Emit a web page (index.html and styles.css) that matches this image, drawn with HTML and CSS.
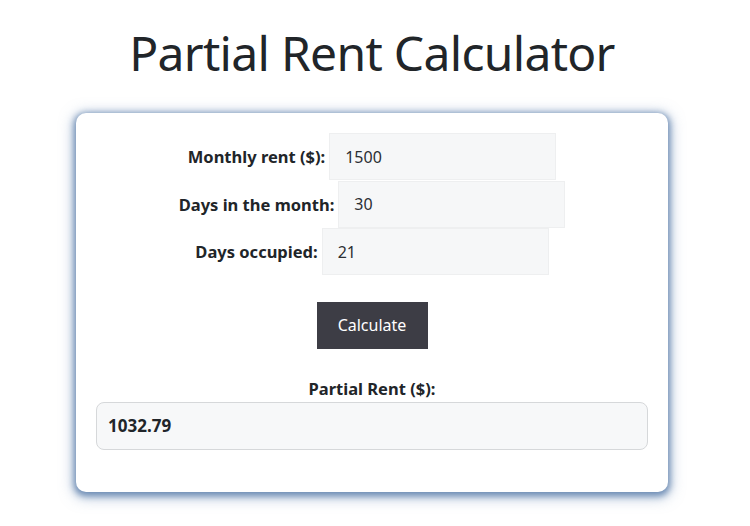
FILE: index.html
```html
<!DOCTYPE html>
<html lang="en">
<head>
    <meta charset="UTF-8">
    <meta name="viewport" content="width=device-width, initial-scale=1.0">
    <title>Partial Rent Calculator</title>
    <link rel="stylesheet" href="styles.css">
</head>
<body>
    <h1>Partial Rent Calculator</h1>
    <div class="calculator">
        <div class="field">
            <label for="rent">Monthly rent ($):</label>
            <input type="text" id="rent" value="1500">
        </div>
        <div class="field">
            <label for="days">Days in the month:</label>
            <input type="text" id="days" value="30">
        </div>
        <div class="field">
            <label for="occupied">Days occupied:</label>
            <input type="text" id="occupied" value="21">
        </div>
        <button class="calc-btn">Calculate</button>
        <div class="result-label">Partial Rent ($):</div>
        <div class="result">1032.79</div>
    </div>
</body>
</html>
```

FILE: styles.css
```css
body {
    margin: 0;
    padding: 0 6px 34px 0;
    font-family: "Noto Sans", "Open Sans", sans-serif;
    color: #212529;
    background-color: #fff;
    text-align: center;
}
h1 {
    font-size: 48px;
    font-weight: 400;
    letter-spacing: -0.7px;
    margin: 0;
    padding: 24px 0 31px;
    line-height: 58px;
}
.calculator {
    width: 552px;
    margin: 0 auto;
    padding: 20px 20px 42px;
    border-radius: 10px;
    background-color: #fff;
    box-shadow: 0 2px 6px 2px rgba(90, 125, 170, 0.8), 0 3px 14px 3px rgba(120, 150, 190, 0.5);
}
.field {
    height: 47.5px;
    display: flex;
    justify-content: center;
    align-items: center;
}
.field label {
    font-weight: bold;
    font-size: 16.5px;
    margin-right: 4px;
}
.field input {
    width: 227px;
    height: 47px;
    box-sizing: border-box;
    padding: 0 15px;
    border: 1px solid #eeeff0;
    background-color: #f6f7f8;
    font-family: inherit;
    font-size: 16px;
    color: #2b2f33;
}
.calc-btn {
    margin-top: 26px;
    width: 111px;
    height: 47px;
    border: none;
    background-color: #3d3d45;
    color: #fff;
    font-family: inherit;
    font-size: 16px;
    cursor: pointer;
}
.result-label {
    margin-top: 28px;
    font-weight: bold;
    font-size: 16.5px;
}
.result {
    margin-top: 2px;
    height: 48px;
    box-sizing: border-box;
    padding: 0 11px;
    display: flex;
    align-items: center;
    border: 1px solid #d6d8da;
    border-radius: 8px;
    background-color: #f7f8f9;
    font-weight: bold;
    font-size: 17px;
    text-align: left;
}
```
